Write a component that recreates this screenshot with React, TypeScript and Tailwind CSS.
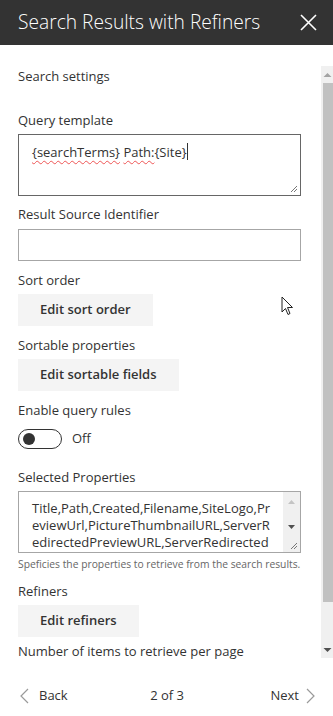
import React from 'react'

const font = { fontFamily: '"Open Sans", "Noto Sans", sans-serif' }

function Label({ children, className = '' }: { children: React.ReactNode; className?: string }) {
  return <div className={`text-[13px] leading-[20px] text-[#333] ${className}`}>{children}</div>
}

function Btn({ children, className = '' }: { children: React.ReactNode; className?: string }) {
  return (
    <div className={`mt-[4px] inline-flex h-[32px] items-center bg-[#f4f4f4] px-[22px] text-[13px] font-semibold text-[#333] ${className}`}>
      {children}
    </div>
  )
}

function Grip() {
  return (
    <svg width="10" height="10" viewBox="0 0 10 10" className="absolute bottom-[2px] right-[2px]">
      <path d="M9 3 L3 9 M9 6 L6 9" stroke="#777" strokeWidth="1" />
    </svg>
  )
}

function Chevron({ dir }: { dir: 'left' | 'right' }) {
  return (
    <svg width="9" height="16" viewBox="0 0 9 16">
      <path d={dir === 'left' ? 'M8 1 L1 8 L8 15' : 'M1 1 L8 8 L1 15'} fill="none" stroke="#9a9a9a" strokeWidth="1.2" />
    </svg>
  )
}

export default function App() {
  return (
    <div className="relative flex h-[716px] w-[333px] flex-col overflow-hidden bg-white" style={font}>
      <div className="flex h-[45px] shrink-0 items-center justify-between bg-[#333333] pl-[18px] pr-[16px]">
        <span className="text-[19.2px] font-light text-white">Search Results with Refiners</span>
        <svg width="17" height="17" viewBox="0 0 17 17">
          <path d="M1 1 L16 16 M16 1 L1 16" stroke="#fff" strokeWidth="1.6" />
        </svg>
      </div>

      <div className="mt-[21px] flex h-[592px] shrink-0">
        <div className="flex-1 pl-[18px] pr-[20px]">
          <Label>Search settings</Label>

          <Label className="mt-[24px]">Query template</Label>
          <div className="relative mt-[4px] h-[62px] border border-[#666] pl-[13px] pt-[5px] text-[13px] leading-[20px] text-[#333]">
            <span className="underline decoration-[#e55] decoration-wavy decoration-[1px] underline-offset-[3px]">{'{searchTerms}'}</span>{' '}
            <span className="underline decoration-[#e55] decoration-wavy decoration-[1px] underline-offset-[3px]">Path:</span>
            {'{Site}'}
            <span className="inline-block h-[17px] w-px translate-y-[3px] bg-[#333]" />
            <Grip />
          </div>

          <Label className="mt-[8px]">Result Source Identifier</Label>
          <div className="mt-[5px] h-[32px] border border-[#a6a6a6]" />

          <Label className="mt-[9px]">Sort order</Label>
          <Btn>Edit sort order</Btn>

          <Label className="mt-[9px]">Sortable properties</Label>
          <Btn>Edit sortable fields</Btn>

          <Label className="mt-[9px]">Enable query rules</Label>
          <div className="mt-[9px] flex items-center gap-[10px]">
            <div className="flex h-[20px] w-[44px] items-center rounded-full border border-[#333] pl-[4px]">
              <div className="h-[12px] w-[12px] rounded-full bg-[#333]" />
            </div>
            <span className="text-[13px] text-[#333]">Off</span>
          </div>

          <Label className="mt-[18px]">Selected Properties</Label>
          <div className="relative mt-[4px] flex h-[62px] border border-[#a6a6a6]">
            <div className="flex-1 overflow-hidden whitespace-nowrap pl-[13px] pt-[8px] text-[13px] leading-[17px] text-[#333]">
              <div>Title,Path,Created,Filename,SiteLogo,Pr</div>
              <div>eviewUrl,PictureThumbnailURL,ServerR</div>
              <div>edirectedPreviewURL,ServerRedirected</div>
            </div>
            <div className="relative w-[17px] shrink-0 bg-[#f0f0f0]">
              <svg width="17" height="40" viewBox="0 0 17 40" className="absolute left-0 top-0">
                <path d="M5 12 L8.5 8 L12 12 Z" fill="#c4c4c4" />
                <path d="M5 33 L8.5 37 L12 33 Z" fill="#505050" />
              </svg>
              <Grip />
            </div>
          </div>
          <div className="mt-[3px] whitespace-nowrap text-[10.3px] leading-[16px] text-[#666]">
            Speficies the properties to retrieve from the search results.
          </div>

          <Label className="mt-[9px]">Refiners</Label>
          <Btn>Edit refiners</Btn>

          <Label className="mt-[4px] whitespace-nowrap">Number of items to retrieve per page</Label>
        </div>

        <div className="relative flex w-[12px] flex-col bg-[#f0f0f0]">
          <div className="flex h-[17px] items-center justify-center">
            <svg width="9" height="6" viewBox="0 0 9 6"><path d="M0.5 5 L4.5 1 L8.5 5 Z" fill="#a3a3a3" /></svg>
          </div>
          <div className="ml-[2px] h-[519px] bg-[#c1c1c1]" />
          <div className="flex-1" />
          <div className="flex h-[17px] items-center justify-center">
            <svg width="9" height="6" viewBox="0 0 9 6"><path d="M0.5 1 L4.5 5 L8.5 1 Z" fill="#505050" /></svg>
          </div>
        </div>
      </div>

      <div className="mt-[28px] flex items-center justify-between pl-[20px] pr-[18px] text-[13px] text-[#333]">
        <div className="flex items-center gap-[10px]">
          <Chevron dir="left" />
          <span>Back</span>
        </div>
        <span className="-ml-[4px]">2 of 3</span>
        <div className="flex items-center gap-[7px]">
          <span>Next</span>
          <Chevron dir="right" />
        </div>
      </div>

      <svg width="13" height="21" viewBox="0 0 13 21" className="absolute left-[281px] top-[296px]">
        <path d="M1 1 L1 16 L4.5 12.5 L7 18.5 L9 17.5 L6.5 11.5 L11.5 11.5 Z" fill="#fff" stroke="#222" strokeWidth="1" strokeLinejoin="round" />
      </svg>
    </div>
  )
}
